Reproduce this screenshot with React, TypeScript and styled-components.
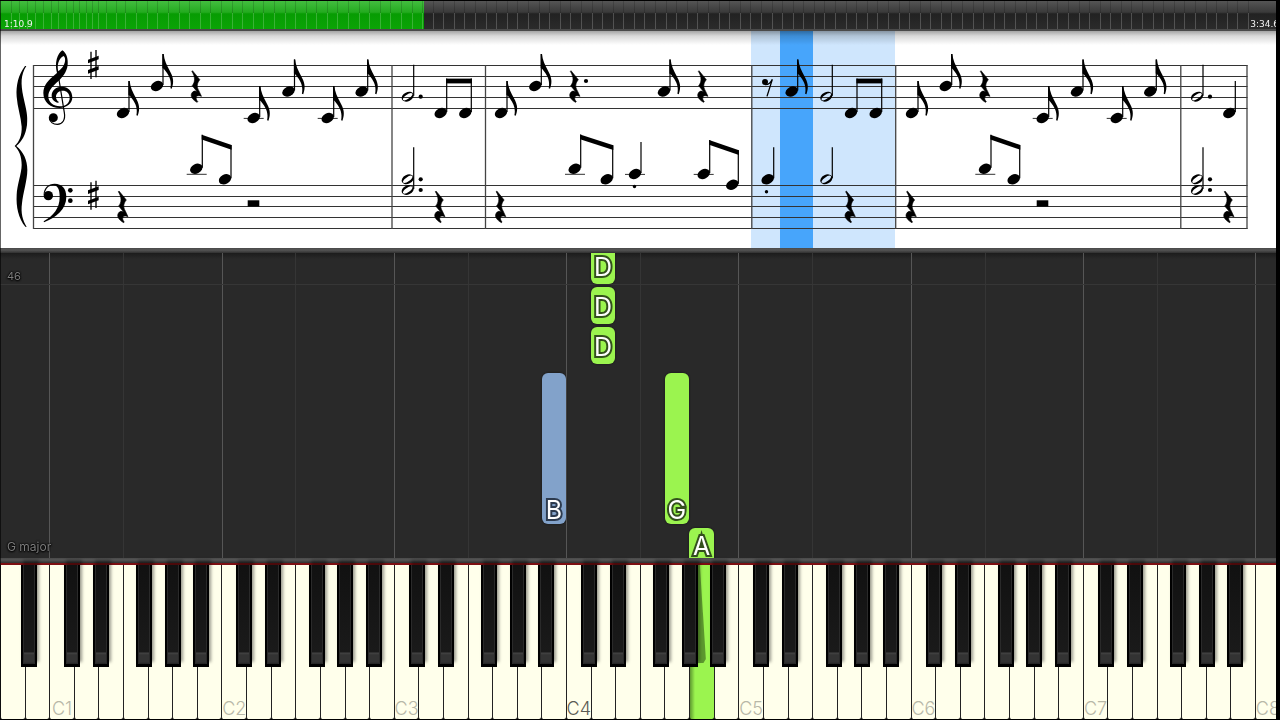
import React from "react";
import styled, { createGlobalStyle, css } from "styled-components";

const GlobalStyle = createGlobalStyle`
  * { box-sizing: border-box; }
  html, body { margin: 0; background: #000; }
  body { font-family: Inter, "Liberation Sans", sans-serif; }
`;

const WHITE_KEYS = 52;
const keyPercent = (key: number) => (key / WHITE_KEYS) * 100;

const Player = styled.main`
  position: relative;
  display: flex;
  flex-direction: column;
  min-height: 100vh;
  overflow: hidden;
  background: #292929;
`;

const ScreenEdge = styled.div<{ $side: "left" | "right" }>`
  position: absolute;
  top: 0;
  bottom: 0;
  z-index: 5;
  pointer-events: none;
  ${({ $side }) =>
    $side === "left"
      ? css`left: 0; width: 1px; background: rgba(0, 0, 0, 0.6);`
      : css`right: 0; width: 4px; background: #000;`}
`;

/* ---------- Song position ---------- */

const Timeline = styled.header`
  position: relative;
  display: flex;
  height: 31px;
  border-top: 1px solid #000;
  border-bottom: 2px solid #4a4a4a;
  background: linear-gradient(#555 0%, #3a3a3a 40%, #222 46%, #2b2b2b 100%);
`;

const Played = styled.div<{ $percent: number }>`
  width: ${({ $percent }) => $percent}%;
  background: linear-gradient(#43bd3f 0%, #24ab20 40%, #079c03 46%, #0ba406 100%);
`;

const TickMarks = styled.svg`
  position: absolute;
  inset: 0;
  width: 100%;
  height: 100%;
`;

const TimeLabel = styled.span<{ $side: "left" | "right" }>`
  position: absolute;
  bottom: 0;
  ${({ $side }) => ($side === "left" ? "left: 4px;" : "right: 1px;")}
  color: #f2f2f2;
  font: 9px/10px "DejaVu Sans", sans-serif;
`;

const TICKS: number[] = [
  11, 19, 27, 35, 43, 51, 58, 66, 73, 79, 86, 92, 98, 106, 116, 125,
  ...Array.from({ length: 106 }, (_, i) => Math.round(136.3 + i * 10.587)),
];

const SongPosition = () => (
  <Timeline role="progressbar" aria-label="Song position" aria-valuenow={33}>
    <Played $percent={33.1} />
    <TickMarks viewBox="0 0 1280 28" preserveAspectRatio="none">
      {TICKS.map((x) => (
        <g key={x}>
          <rect x={x} y={0} width={1} height={12} fill="#000" opacity={0.16} />
          <rect x={x} y={12} width={1} height={16} fill="#fff" opacity={0.2} />
        </g>
      ))}
    </TickMarks>
    <TimeLabel $side="left">1:10.9</TimeLabel>
    <TimeLabel $side="right">3:34.6</TimeLabel>
  </Timeline>
);

/* ---------- Sheet music ---------- */

const Sheet = styled.section`
  background: linear-gradient(#a5a5a5 0, #d9d9d9 5px, #fff 14px);
`;

const Score = styled.svg`
  display: block;
  width: 100%;
  height: auto;
  mix-blend-mode: multiply;
`;

const INK = "#000";
const LINE = "#333";

const Head = ({ x, y }: { x: number; y: number }) => (
  <ellipse cx={x} cy={y} rx={6.5} ry={4.8} transform={`rotate(-26 ${x} ${y})`} fill={INK} />
);

const Stem = ({ x, top, bottom }: { x: number; top: number; bottom: number }) => (
  <path d={`M${x} ${top}V${bottom}`} stroke={INK} strokeWidth={1.2} />
);

const Ledger = ({ x, y }: { x: number; y: number }) => (
  <path d={`M${x - 10} ${y}h20`} stroke={LINE} strokeWidth={1} />
);

const Dot = ({ x, y, r = 2.1 }: { x: number; y: number; r?: number }) => (
  <circle cx={x} cy={y} r={r} fill={INK} />
);

const Eighth = ({ x, y, ledger }: { x: number; y: number; ledger?: boolean }) => (
  <g>
    {ledger && <Ledger x={x} y={y + 0.4} />}
    <Head x={x} y={y} />
    <Stem x={x + 6} top={y - 32} bottom={y - 1} />
    <path
      transform={`translate(${x + 5.4} ${y - 32}) scale(.3333)`}
      d="M0 0H4C5 18 13 33 22 50C32 68 36 82 28 104L24 103C28 82 22 68 11 53C6 46 3 43 0 42Z"
      fill={INK}
    />
  </g>
);

const Quarter = ({ x, y, ledger }: { x: number; y: number; ledger?: boolean }) => (
  <g>
    {ledger && <Ledger x={x} y={y + 0.4} />}
    <Head x={x} y={y} />
    <Stem x={x + 6} top={y - 32} bottom={y - 1} />
  </g>
);

const HalfHead = ({ x, y }: { x: number; y: number }) => (
  <g transform={`translate(${x} ${y}) rotate(-26)`} fill={INK}>
    <path
      fillRule="evenodd"
      d="M-6.4 0A6.4 4.5 0 1 0 6.4 0A6.4 4.5 0 1 0 -6.4 0ZM-5.5 1A5.6 2.1 -8 1 0 5.5 -1A5.6 2.1 -8 1 0 -5.5 1Z"
    />
  </g>
);

const Half = ({ x, ys, dotted }: { x: number; ys: number[]; dotted?: boolean }) => (
  <g>
    {ys.map((y) => (
      <g key={y}>
        <HalfHead x={x} y={y} />
        {dotted && <Dot x={x + 13} y={y} />}
      </g>
    ))}
    <Stem x={x + 6} top={ys[0] - 32} bottom={ys[ys.length - 1] - 1} />
  </g>
);

type PairProps = { x1: number; y1: number; x2: number; y2: number; top1: number; top2: number };

const BeamedPair = ({ x1, y1, x2, y2, top1, top2 }: PairProps) => (
  <g>
    <Head x={x1} y={y1} />
    <Head x={x2} y={y2} />
    <Stem x={x1 + 6} top={top1} bottom={y1 - 1} />
    <Stem x={x2 + 6} top={top2} bottom={y2 - 1} />
    <path
      d={`M${x1 + 5.4} ${top1}L${x2 + 6.6} ${top2}V${top2 + 4.8}L${x1 + 5.4} ${top1 + 4.8}Z`}
      fill={INK}
    />
  </g>
);

const QuarterRest = ({ x, y }: { x: number; y: number }) => (
  <path
    transform={`translate(${x} ${y}) scale(.3333)`}
    d="M3 0L25 27C16 38 15 48 22 60L30 77C21 73 14 75 14 82C14 86 16 90 19 93L17 95C4 88 -5 77 1 67C5 60 12 60 17 63L2 45C11 34 12 20 1 2Z"
    fill={INK}
    stroke={INK}
    strokeWidth={1.8}
    strokeLinejoin="round"
  />
);

const HalfRest = ({ x }: { x: number }) => (
  <rect x={x} y={200.3} width={11.6} height={6.3} fill={INK} />
);

const EighthRest = ({ x, y }: { x: number; y: number }) => (
  <g transform={`translate(${x} ${y}) scale(.3333)`}>
    <circle cx={9} cy={9} r={9} fill={INK} />
    <path d="M9 17C19 18 26 12 31 1L15 52" fill="none" stroke={INK} strokeWidth={4} />
  </g>
);

const Sharp = ({ x, y }: { x: number; y: number }) => (
  <g transform={`translate(${x} ${y}) scale(.3333)`} fill={INK}>
    <path d="M7 5h4v82h-4zM22 0h4v82h-4z" />
    <path d="M0 29L32 17V28L0 40ZM0 60L32 48V59L0 71Z" />
  </g>
);

const TrebleClef = () => (
  <g transform="scale(.3333)">
    <path
      fillRule="evenodd"
      fill={INK}
      d="M171 219C163 190 172 160 187 151C199 158 205 176 203 194C201 217 186 233 171 247C156 261 145 273 145 289C145 307 160 319 180 319C198 319 209 308 209 294C209 280 200 272 188 272C176 272 168 280 168 290C168 298 172 303 177 306C176 309 171 309 167 306C159 302 154 295 155 285C156 270 169 260 186 260C204 260 217 273 217 292C217 310 201 324 179 324C152 324 130 306 130 279C130 256 147 239 163 226ZM175 214C170 195 176 175 191 168C199 175 195 192 188 201C184 206 180 210 175 214Z"
    />
    <path
      d="M173 214L193 338C197 360 187 373 172 373C160 373 151 367 148 356"
      fill="none"
      stroke={INK}
      strokeWidth={3.6}
    />
    <circle cx={160} cy={353} r={13.5} fill={INK} />
  </g>
);

const BassClef = () => (
  <g transform="scale(.3333)" fill={INK}>
    <path d="M131 586C130 564 145 551 164 551C186 551 199 566 199 590C199 628 170 651 132 667L131 664C161 646 179 625 179 590C179 568 173 556 160 556C148 556 140 562 136 574Z" />
    <circle cx={145} cy={587} r={14} />
    <circle cx={211} cy={571} r={7} />
    <circle cx={211} cy={602} r={7} />
  </g>
);

const Brace = () => (
  <path
    transform="scale(.3333)"
    fill={INK}
    d="M79 198C62 225 62 250 70 290C79 330 84 345 81 375C77 405 65 425 49 438C70 455 82 480 82 510C82 540 69 580 66 610C62 640 68 660 80 681L76 680C55 655 48 620 50 585C51 555 65 520 65 495C65 470 58 452 44 438C58 425 66 405 65 380C63 350 52 320 50 290C48 255 55 225 75 198Z"
  />
);

const STAFF_LINES = [65.5, 76.5, 86.5, 97.5, 108.5, 185.5, 196.5, 206.5, 217.5, 228.5];
const BAR_LINES = [33.5, 392, 485.5, 751.8, 895.7, 1180.8, 1247];

const EIGHTHS: [number, number, boolean?][] = [
  [123, 113], [157, 86], [253.7, 118, true], [288.5, 91.5], [327.7, 118, true], [361.7, 91.5],
  [501, 113], [535.3, 86], [664, 91.5], [791.7, 91.5],
  [912, 113], [945.7, 86], [1042.7, 118, true], [1077, 91.5], [1116.7, 118, true], [1150.3, 91.5],
];

const QUARTER_RESTS: [number, number][] = [
  [191.5, 70.7], [118, 191], [435, 191], [570, 70.7], [495.8, 191],
  [698, 70.7], [845.3, 191], [980, 70.7], [906.3, 191], [1224, 191],
];

const PAIRS: PairProps[] = [
  { x1: 196.3, y1: 168.7, x2: 225, y2: 179.3, top1: 134.7, top2: 145 },
  { x1: 440.7, y1: 113, x2: 465.3, y2: 113, top1: 78.6, top2: 78.6 },
  { x1: 574.7, y1: 168.7, x2: 606.7, y2: 179.3, top1: 134.5, top2: 145.3 },
  { x1: 703.7, y1: 174, x2: 732.3, y2: 184.7, top1: 140, top2: 150.3 },
  { x1: 851, y1: 113, x2: 875.7, y2: 113, top1: 78.6, top2: 78.6 },
  { x1: 985, y1: 168.7, x2: 1013.7, y2: 179.3, top1: 134.7, top2: 145 },
];

const SheetMusic = () => (
  <Sheet>
    <Score viewBox="0 31 1280 217" role="img" aria-label="Sheet music in G major">
      <rect x={751} y={31} width={144} height={217} fill="#cfe6fd" />
      <rect x={780} y={31} width={33} height={217} fill="#47a5fb" />
      {STAFF_LINES.map((y) => (
        <path key={y} d={`M33 ${y}H1247.5`} stroke={LINE} strokeWidth={1} />
      ))}
      {BAR_LINES.map((x) => (
        <path key={x} d={`M${x} 65V229`} stroke="#444" strokeWidth={1.3} />
      ))}
      <Brace />
      <TrebleClef />
      <BassClef />
      <Sharp x={88} y={50} />
      <Sharp x={88} y={180.7} />
      {EIGHTHS.map(([x, y, ledger]) => (
        <Eighth key={x} x={x} y={y} ledger={ledger} />
      ))}
      {QUARTER_RESTS.map(([x, y]) => (
        <QuarterRest key={x} x={x} y={y} />
      ))}
      {[196.7, 575, 985.3].map((x) => (
        <Ledger key={x} x={x} y={174.3} />
      ))}
      <Ledger x={703.7} y={174.4} />
      {PAIRS.map((pair) => (
        <BeamedPair key={pair.x1} {...pair} />
      ))}
      <Half x={407.7} ys={[96.7]} dotted />
      <Half x={407.7} ys={[179.3, 190]} dotted />
      <Half x={826.3} ys={[96.7]} />
      <Half x={826.3} ys={[179.3]} />
      <Half x={1197} ys={[96.7]} dotted />
      <Half x={1197} ys={[179.3, 190]} dotted />
      <Quarter x={635} y={174} ledger />
      <Quarter x={767.7} y={179.3} />
      <Quarter x={1229.3} y={113} />
      <Dot x={586} y={81} />
      <Dot x={634.5} y={186.5} r={1.7} />
      <Dot x={766.5} y={191.8} r={1.7} />
      <EighthRest x={762} y={79} />
      <HalfRest x={247.7} />
      <HalfRest x={1036.7} />
    </Score>
  </Sheet>
);

/* ---------- Falling notes ---------- */

const Divider = styled.div`
  height: 5px;
  background: linear-gradient(#4a4a4a, #555 40%, #303030);
`;

const Roll = styled.section`
  position: relative;
  flex: 1;
  min-height: 305px;
  overflow: hidden;
  background: linear-gradient(#1c1c1c 0, #292929 6px);
`;

const GridLine = styled.div<{ $key: number; $strong: boolean }>`
  position: absolute;
  top: 0;
  bottom: 0;
  left: ${({ $key }) => keyPercent($key)}%;
  width: 1px;
  background: ${({ $strong }) => ($strong ? "#565656" : "#353535")};
`;

const MeasureLine = styled.div`
  position: absolute;
  left: 0;
  right: 0;
  bottom: 273px;
  height: 1px;
  background: #363636;
`;

const RollCaption = styled.span<{ $bottom: number; $size: number }>`
  position: absolute;
  left: 7px;
  bottom: ${({ $bottom }) => $bottom}px;
  color: #7c7c7c;
  font-size: ${({ $size }) => $size}px;
  line-height: 14px;
  text-shadow: 0 0 2px #000, 0 0 2px #000, 0 1px 2px #000;
`;

const HAND_COLORS = {
  left: { fill: "#82a2ca", outline: "#2c3a4e" },
  right: { fill: "#9bf44f", outline: "#33501d" },
};

type NoteProps = {
  $key: number;
  $bottom: number;
  $height: number;
  $hand: "left" | "right";
  $pad: number;
};

const NoteBlock = styled.div<NoteProps>`
  position: absolute;
  left: ${({ $key }) => keyPercent($key)}%;
  bottom: ${({ $bottom }) => $bottom}px;
  width: ${keyPercent(1)}%;
  height: ${({ $height }) => $height}px;
  display: flex;
  align-items: flex-end;
  justify-content: center;
  padding-bottom: ${({ $pad }) => $pad}px;
  border-radius: ${({ $bottom }) => ($bottom === 0 ? "6px 6px 0 0" : "6px")};
  box-shadow: 0 0 2px #111;
  background: ${({ $hand }) => HAND_COLORS[$hand].fill};
  color: #fff;
  font-size: 25px;
  line-height: 24px;
  -webkit-text-stroke: 4px ${({ $hand }) => HAND_COLORS[$hand].outline};
  paint-order: stroke fill;
`;

const NOTES = [
  { name: "D", key: 24, bottom: 274, height: 37, pad: 5, hand: "right" },
  { name: "D", key: 24, bottom: 234, height: 37, pad: 5, hand: "right" },
  { name: "D", key: 24, bottom: 194, height: 37, pad: 5, hand: "right" },
  { name: "B", key: 22, bottom: 34, height: 151, pad: 2, hand: "left" },
  { name: "G", key: 27, bottom: 34, height: 151, pad: 2, hand: "right" },
  { name: "A", key: 28, bottom: 0, height: 30, pad: 0, hand: "right" },
] as const;

const OCTAVES = [0, 1, 2, 3, 4, 5, 6, 7];

const NoteRoll = () => (
  <Roll aria-label="Upcoming notes">
    {OCTAVES.map((octave) => (
      <React.Fragment key={octave}>
        <GridLine $key={2 + octave * 7} $strong />
        <GridLine $key={5 + octave * 7} $strong={false} />
      </React.Fragment>
    ))}
    <MeasureLine />
    <RollCaption $bottom={275} $size={11}>46</RollCaption>
    <RollCaption $bottom={4} $size={12}>G major</RollCaption>
    {NOTES.map((note) => (
      <NoteBlock
        key={`${note.key}-${note.bottom}`}
        $key={note.key}
        $bottom={note.bottom}
        $height={note.height}
        $hand={note.hand}
        $pad={note.pad}
      >
        {note.name}
      </NoteBlock>
    ))}
  </Roll>
);

/* ---------- Keyboard ---------- */

const Keyboard = styled.section`
  position: relative;
  display: flex;
  height: 157px;
  border-top: 2px solid #7d0f12;
  border-bottom: 1px solid #000;
  background: #000;
`;

const WhiteKey = styled.button<{ $pressed: boolean; $middle: boolean }>`
  flex: 1 1 0;
  min-width: 0;
  display: flex;
  align-items: flex-end;
  justify-content: center;
  padding: 0;
  border: 0;
  border-left: 1px solid #222;
  border-radius: 0 0 2px 2px;
  background: ${({ $pressed }) =>
    $pressed ? "linear-gradient(90deg, #5f9a30 0, #9bf44f 5px)" : "#ffffeb"};
  color: ${({ $middle }) => ($middle ? "#5c5c54" : "#b8b8a8")};
  font: 300 18px/20px Inter, sans-serif;
  white-space: nowrap;
`;

const BlackKey = styled.button<{ $left: number; $deepShadow: boolean }>`
  position: absolute;
  top: 0;
  left: ${({ $left }) => $left}%;
  width: 1.25%;
  height: 102px;
  padding: 0;
  border: solid #000;
  border-width: 0 2px 3px;
  background: linear-gradient(#111 0, #1a1a1a 87px, #444 88px, #333 90px, #333 97px, #222 100%);
  box-shadow: inset 1px 0 #2a2a2a, inset -1px 0 #2a2a2a, 2px -5px 3px rgba(0, 0, 0, 0.4);

  ${({ $deepShadow }) =>
    $deepShadow &&
    css`
      &::after {
        content: "";
        position: absolute;
        top: 0;
        left: calc(100% + 2px);
        width: 8px;
        height: 98px;
        background: rgba(40, 75, 20, 0.55);
        clip-path: polygon(0 0, 2px 0, 100% 96%, 70% 100%, 0 100%);
      }
    `}
`;

/* Left edges of the black keys, measured in white-key widths from each C. */
const BLACK_OFFSETS = [0.605, 1.78, 3.545, 4.7, 5.86];
const BLACK_NAMES = ["C♯", "D♯", "F♯", "G♯", "A♯"];
const WHITE_NAMES = ["C", "D", "E", "F", "G", "A", "B"];
const PRESSED_KEY = 28;

const BLACK_KEYS = [
  { label: "A♯0", at: 0.86 },
  ...OCTAVES.slice(0, 7).flatMap((octave) =>
    BLACK_OFFSETS.map((offset, i) => ({
      label: `${BLACK_NAMES[i]}${octave + 1}`,
      at: 2 + octave * 7 + offset,
    }))
  ),
];

const Piano = () => (
  <Keyboard aria-label="Piano keyboard">
    {Array.from({ length: WHITE_KEYS }, (_, i) => {
      const name = `${WHITE_NAMES[(i + 5) % 7]}${Math.floor((i + 5) / 7)}`;
      return (
        <WhiteKey key={name} type="button" aria-label={name} $pressed={i === PRESSED_KEY} $middle={name === "C4"}>
          {name[0] === "C" ? name : null}
        </WhiteKey>
      );
    })}
    {BLACK_KEYS.map(({ label, at }) => (
      <BlackKey
        key={label}
        type="button"
        aria-label={label}
        $left={keyPercent(at)}
        $deepShadow={label === "G♯4"}
      />
    ))}
  </Keyboard>
);

export default function App() {
  return (
    <Player>
      <GlobalStyle />
      <SongPosition />
      <SheetMusic />
      <Divider />
      <NoteRoll />
      <Divider />
      <Piano />
      <ScreenEdge $side="left" />
      <ScreenEdge $side="right" />
    </Player>
  );
}
